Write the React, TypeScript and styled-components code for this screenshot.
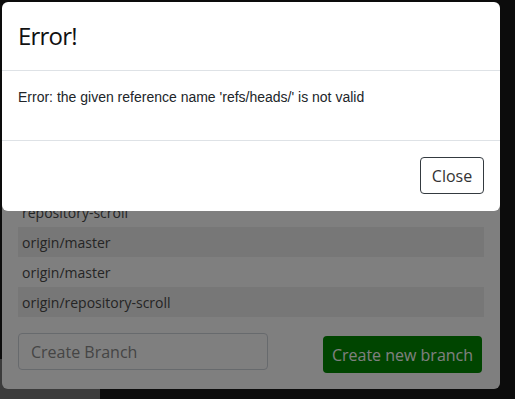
import React from "react";
import styled, { createGlobalStyle } from "styled-components";

const GlobalStyle = createGlobalStyle`
  html, body {
    margin: 0;
    padding: 0;
    background: #181818;
  }
  * {
    box-sizing: border-box;
  }
`;

const Stage = styled.div`
  position: relative;
  width: 515px;
  height: 399px;
  overflow: hidden;
  background: #181818;
  font-family: "Open Sans", "Noto Sans", sans-serif;
`;

const SideBar = styled.div`
  position: absolute;
  left: 0;
  bottom: 0;
  width: 100px;
  height: 40px;
  background: #767676;
`;

const Backdrop = styled.div`
  position: absolute;
  inset: 0;
  background: rgba(0, 0, 0, 0.5);
  z-index: 2;
`;

const Dialog = styled.div<{ $top: number; $layer: number }>`
  position: absolute;
  top: ${(p) => p.$top}px;
  left: 2px;
  width: 498px;
  background: #fff;
  border-radius: 6px;
  z-index: ${(p) => p.$layer};
`;

const BranchBody = styled.div`
  padding: 15px 16px 16px 16px;
`;

const BranchList = styled.div`
  display: flex;
  flex-direction: column;
`;

const BranchRow = styled.div`
  height: 30px;
  display: flex;
  align-items: center;
  padding: 0 4px;
  font-size: 14px;
  color: #4a4a4a;

  &:nth-child(even) {
    background: #eeeeee;
  }
`;

const CreateRow = styled.div`
  display: flex;
  justify-content: space-between;
  align-items: flex-start;
  margin-top: 16px;
  padding-right: 2px;
`;

const BranchInput = styled.input`
  width: 250px;
  height: 37px;
  border: 1px solid #ced4da;
  border-radius: 4px;
  padding: 0 12px;
  font-family: "Open Sans", "Noto Sans", sans-serif;
  font-size: 16px;
  color: #333;

  &::placeholder {
    color: #8a8a8a;
  }
`;

const GreenButton = styled.button`
  margin-top: 3px;
  width: 159px;
  height: 37px;
  border: none;
  border-radius: 4px;
  background: #008a00;
  color: #fff;
  font-family: "Open Sans", "Noto Sans", sans-serif;
  font-size: 16px;
`;

const Header = styled.div`
  padding: 16px;
  border-bottom: 1px solid #dee2e6;
`;

const Title = styled.h4`
  margin: 0;
  font-size: 24px;
  font-weight: 400;
  line-height: 36px;
  letter-spacing: -0.8px;
  color: #111;
`;

const Body = styled.div`
  padding: 16px;
`;

const Message = styled.p`
  margin: 0 0 16px 0;
  font-family: "Liberation Sans", Arial, sans-serif;
  font-size: 14px;
  line-height: 21px;
  color: #212529;
`;

const Footer = styled.div`
  display: flex;
  justify-content: flex-end;
  padding: 16px 16px 17px 16px;
  border-top: 1px solid #dee2e6;
`;

const CloseButton = styled.button`
  width: 64px;
  height: 37px;
  background: #fff;
  border: 1px solid #343a40;
  border-radius: 4px;
  font-family: "Open Sans", "Noto Sans", sans-serif;
  font-size: 16px;
  color: #333;
`;

const branches = [
  "repository-scroll",
  "origin/master",
  "origin/master",
  "origin/repository-scroll",
];

export default function App() {
  return (
    <Stage>
      <GlobalStyle />
      <SideBar />
      <Dialog $top={182} $layer={1}>
        <BranchBody>
          <BranchList>
            {branches.map((b, i) => (
              <BranchRow key={i}>{b}</BranchRow>
            ))}
          </BranchList>
          <CreateRow>
            <BranchInput placeholder="Create Branch" />
            <GreenButton>Create new branch</GreenButton>
          </CreateRow>
        </BranchBody>
      </Dialog>
      <Backdrop />
      <Dialog $top={2} $layer={3}>
        <Header>
          <Title>Error!</Title>
        </Header>
        <Body>
          <Message>Error: the given reference name 'refs/heads/' is not valid</Message>
        </Body>
        <Footer>
          <CloseButton>Close</CloseButton>
        </Footer>
      </Dialog>
    </Stage>
  );
}
